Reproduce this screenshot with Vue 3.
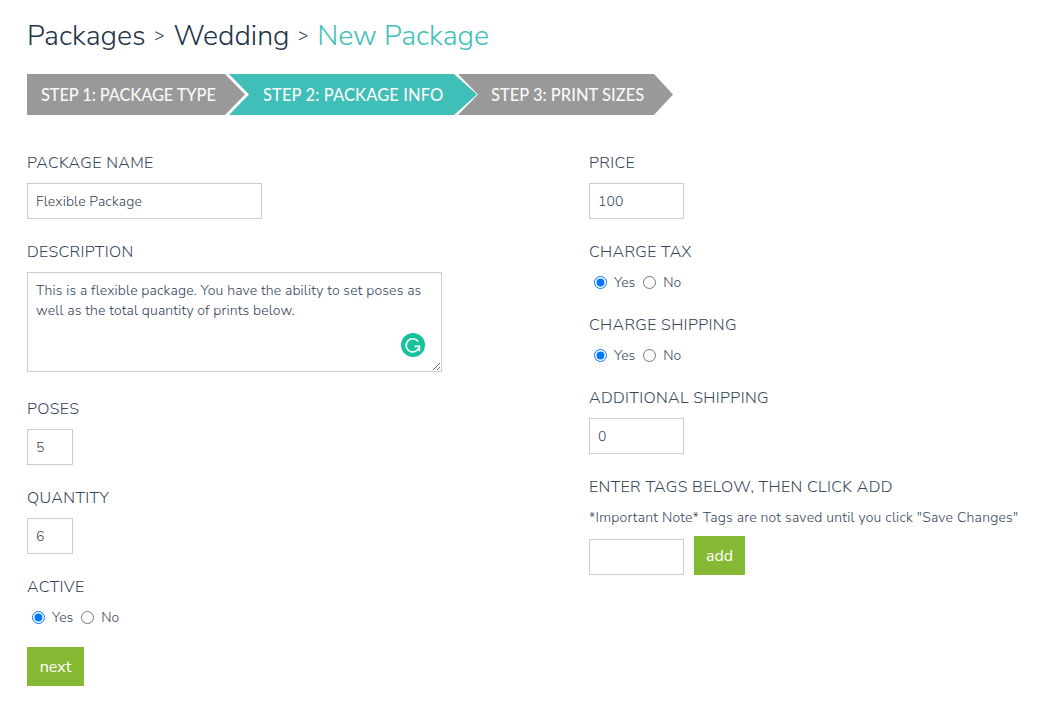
<script setup>
const steps = [
  { label: 'STEP 1: PACKAGE TYPE', cls: 'first' },
  { label: 'STEP 2: PACKAGE INFO', cls: 'active' },
  { label: 'STEP 3: PRINT SIZES', cls: 'last' }
]
</script>

<template>
  <main class="page">
    <h1 class="title">
      <span>Packages</span><span class="sep">&gt;</span><span>Wedding</span><span class="sep">&gt;</span><span class="current">New Package</span>
    </h1>

    <nav class="steps">
      <div v-for="s in steps" :key="s.label" class="step" :class="s.cls">{{ s.label }}</div>
    </nav>

    <form class="columns" @submit.prevent>
      <section class="col">
        <div class="field">
          <label class="label">PACKAGE NAME</label>
          <input class="input w-name" value="Flexible Package" />
        </div>
        <div class="field area-field">
          <label class="label">DESCRIPTION</label>
          <div class="area-wrap">
            <textarea class="input area">This is a flexible package. You have the ability to set poses as well as the total quantity of prints below.</textarea>
            <svg class="grammarly" width="24" height="24" viewBox="0 0 24 24">
              <circle cx="12" cy="12" r="12" fill="#15c39a" />
              <path d="M17.2 8.6A6.6 6.6 0 1 0 17.6 15.4" fill="none" stroke="#fff" stroke-width="1.7" />
              <path d="M13.6 13.4H18.4V18.2" fill="none" stroke="#fff" stroke-width="1.7" />
            </svg>
          </div>
        </div>
        <div class="field">
          <label class="label">POSES</label>
          <input class="input w-small" value="5" />
        </div>
        <div class="field">
          <label class="label">QUANTITY</label>
          <input class="input w-small" value="6" />
        </div>
        <div class="field radio-field">
          <label class="label">ACTIVE</label>
          <div class="radios">
            <input type="radio" name="active" checked /><span>Yes</span>
            <input type="radio" name="active" /><span>No</span>
          </div>
        </div>
        <button class="btn next" type="button">next</button>
      </section>

      <section class="col right">
        <div class="field">
          <label class="label">PRICE</label>
          <input class="input w-mid" value="100" />
        </div>
        <div class="field radio-field">
          <label class="label">CHARGE TAX</label>
          <div class="radios">
            <input type="radio" name="tax" checked /><span>Yes</span>
            <input type="radio" name="tax" /><span>No</span>
          </div>
        </div>
        <div class="field radio-field">
          <label class="label">CHARGE SHIPPING</label>
          <div class="radios">
            <input type="radio" name="ship" checked /><span>Yes</span>
            <input type="radio" name="ship" /><span>No</span>
          </div>
        </div>
        <div class="field">
          <label class="label">ADDITIONAL SHIPPING</label>
          <input class="input w-mid" value="0" />
        </div>
        <div class="field">
          <label class="label">ENTER TAGS BELOW, THEN CLICK ADD</label>
          <p class="note">*Important Note* Tags are not saved until you click "Save Changes"</p>
          <div class="tag-row">
            <input class="input w-mid" />
            <button class="btn add" type="button">add</button>
          </div>
        </div>
      </section>
    </form>
  </main>
</template>

<style>
html, body { margin: 0; background: #fff; }
</style>

<style scoped>
.page {
  box-sizing: border-box;
  width: 1051px;
  height: 713px;
  padding: 17px 0 0 27px;
  overflow: hidden;
  font-family: "Nunito Sans", Lato, "Open Sans", sans-serif;
  font-weight: 300;
  color: #35455a;
}
.title {
  margin: 0;
  height: 37px;
  line-height: 37px;
  font-size: 28.5px;
  font-weight: 300;
  color: #233349;
  display: flex;
  align-items: center;
}
.sep { font-size: 17px; margin: 0 9px 0 8.5px; }
.current { color: #3fbfb7; }

.steps { display: flex; margin-top: 20px; }
.step {
  box-sizing: border-box;
  height: 41px;
  line-height: 43px;
  font-family: Lato, sans-serif;
  font-size: 16.5px;
  font-weight: 500;
  color: #f8f8f8;
  background: #999;
  white-space: nowrap;
}
.step.first {
  flex: none;
  width: 218px;
  padding-left: 14px;
  letter-spacing: -0.15px;
  clip-path: polygon(0 0, calc(100% - 20px) 0, 100% 50%, calc(100% - 20px) 100%, 0 100%);
}
.step.active {
  flex: none;
  width: 248px;
  margin-left: -16px;
  padding-left: 34px;
  letter-spacing: 0.1px;
  background: #3fbfb7;
  clip-path: polygon(0 0, calc(100% - 23px) 0, 100% 50%, calc(100% - 23px) 100%, 0 100%, 20px 50%);
}
.step.last {
  flex: none;
  width: 215px;
  margin-left: -19px;
  padding-left: 33px;
  clip-path: polygon(0 0, calc(100% - 19px) 0, 100% 50%, calc(100% - 19px) 100%, 0 100%, 20px 50%);
}

.columns { display: flex; margin-top: 36px; }
.col { flex: none; width: 562px; }
.field { margin-bottom: 21px; }
.label {
  display: block;
  height: 24px;
  line-height: 24px;
  margin-bottom: 8px;
  font-size: 16px;
  letter-spacing: 0.35px;
  color: #35455a;
}
.input {
  display: block;
  box-sizing: border-box;
  height: 36px;
  padding: 0 8px;
  border: 1px solid #ccc;
  border-radius: 0;
  outline: none;
  background: #fff;
  font-family: inherit;
  font-weight: 300;
  font-size: 14px;
  letter-spacing: 0.15px;
  color: #35455a;
}
.w-name { width: 235px; }
.w-small { width: 46px; }
.w-mid { width: 95px; }
.area-wrap { position: relative; width: 415px; height: 100px; }
.area {
  width: 415px;
  height: 100px;
  padding: 8px;
  line-height: 20px;
  resize: both;
}
.grammarly { position: absolute; left: 374px; top: 61px; }
.area-field { margin-bottom: 25px; }
.radios {
  display: flex;
  align-items: center;
  height: 20px;
  padding-left: 5px;
  font-size: 14px;
  color: #35455a;
}
.radios input { margin: 0; width: 13px; height: 13px; }
.radios span { margin: 0 8px 0 7px; }
.note { margin: 0 0 9px; height: 22px; line-height: 22px; font-size: 14px; letter-spacing: 0.22px; color: #35455a; white-space: nowrap; }
.tag-row { display: flex; align-items: flex-end; gap: 10px; margin-top: -2px; }
.btn {
  border: 0;
  padding: 0;
  background: #86b933;
  color: #fff;
  font-family: inherit;
  font-weight: 400;
  font-size: 16px;
  height: 39px;
}
.next { width: 57px; display: block; margin-top: -1px; }
.add { width: 51px; }
</style>
